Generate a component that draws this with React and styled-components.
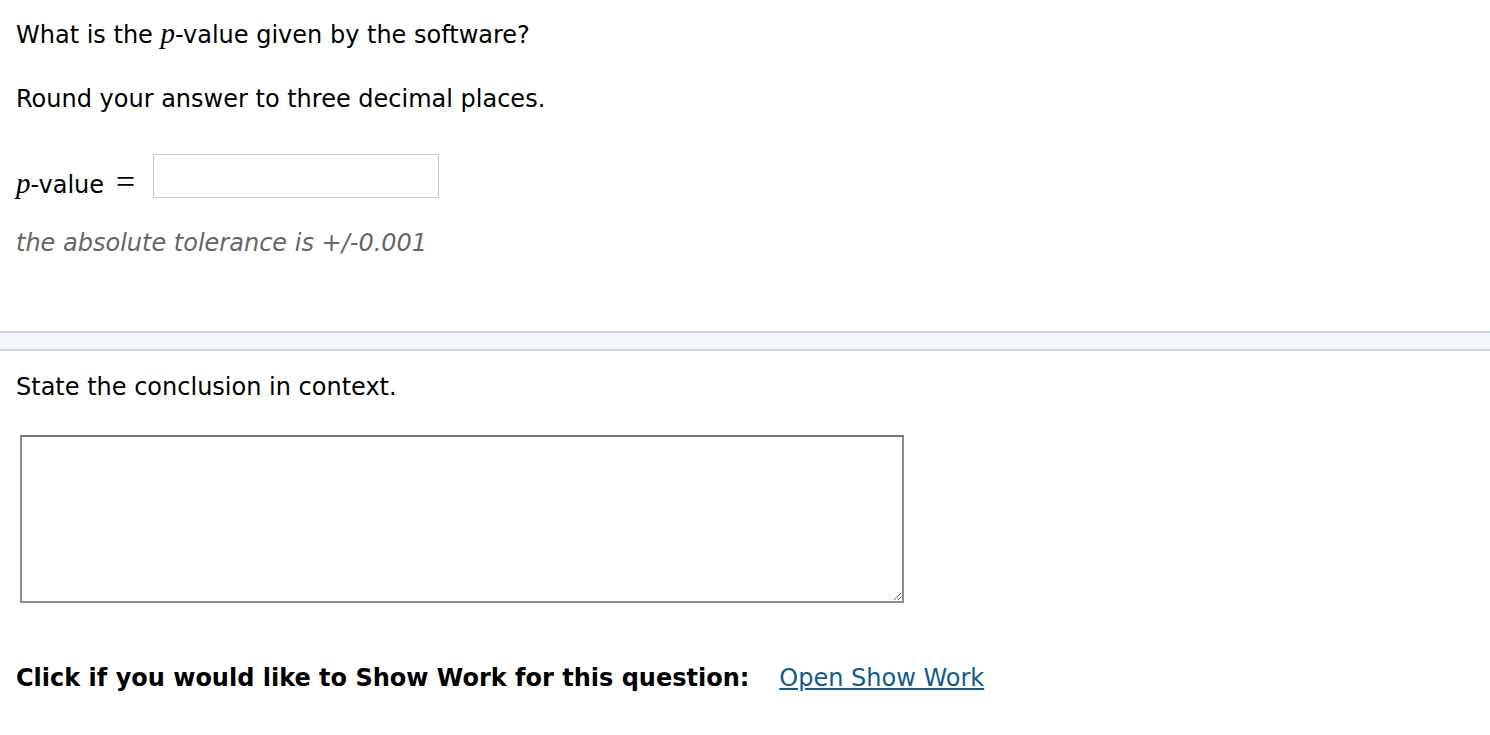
import React from "react";
import styled, { createGlobalStyle } from "styled-components";

const GlobalStyle = createGlobalStyle`
  body {
    margin: 0;
    background: #ffffff;
    font-family: "DejaVu Sans", Verdana, sans-serif;
    color: #000000;
  }
`;

const Page = styled.div`
  width: 1490px;
  padding-top: 18px;
`;

const Section = styled.div`
  padding: 0 16px;
`;

const Para = styled.p`
  margin: 0;
  font-size: 24px;
  line-height: 30px;
  margin-bottom: ${(p) => p.$gap || 0}px;
`;

const MathVar = styled.span`
  font-family: "Liberation Serif", "Times New Roman", serif;
  font-style: italic;
  font-size: 29px;
  line-height: 30px;
`;

const MathOp = styled.span`
  font-family: "Liberation Serif", "Times New Roman", serif;
  font-size: 34px;
  line-height: 30px;
  margin-left: 12px;
`;

const AnswerRow = styled.div`
  display: flex;
  align-items: center;
  gap: 18px;
  height: 44px;
  font-size: 24px;
  margin-bottom: 30px;
`;

const AnswerLabel = styled.span`
  padding-top: 14px;
  line-height: 30px;
`;

const AnswerInput = styled.input`
  width: 286px;
  height: 44px;
  box-sizing: border-box;
  border: 1px solid #c8c8c8;
  border-radius: 0;
  outline: none;
`;

const Hint = styled.p`
  margin: 0;
  font-size: 24px;
  line-height: 30px;
  font-style: italic;
  color: #666666;
`;

const Separator = styled.div`
  margin-top: 73px;
  height: 16px;
  background: #f4f7fa;
  border-top: 2px solid #cbd3df;
  border-bottom: 2px solid #cbd3df;
`;

const Conclusion = styled(Section)`
  padding-top: 21px;
`;

const AnswerArea = styled.textarea`
  display: block;
  margin: 33px 0 0 4px;
  width: 884px;
  height: 168px;
  box-sizing: border-box;
  border: 2px solid #8e8e8e;
  border-top-color: #767676;
  border-radius: 0;
  resize: both;
  outline: none;
`;

const ShowWork = styled.div`
  display: flex;
  align-items: center;
  gap: 30px;
  margin-top: 61px;
  font-size: 24px;
`;

const ShowWorkLabel = styled.span`
  font-weight: bold;
`;

const ShowWorkLink = styled.a`
  color: #115b8e;
  text-decoration: underline;
  cursor: pointer;
`;

const App = () => {
  return (
    <>
      <GlobalStyle />
      <Page>
        <Section>
          <Para $gap={34}>
            What is the <MathVar>p</MathVar>-value given by the software?
          </Para>
          <Para $gap={40}>Round your answer to three decimal places.</Para>
          <AnswerRow>
            <AnswerLabel>
              <MathVar>p</MathVar>-value<MathOp>=</MathOp>
            </AnswerLabel>
            <AnswerInput type="text" />
          </AnswerRow>
          <Hint>the absolute tolerance is +/-0.001</Hint>
        </Section>
        <Separator />
        <Conclusion>
          <Para>State the conclusion in context.</Para>
          <AnswerArea />
          <ShowWork>
            <ShowWorkLabel>
              Click if you would like to Show Work for this question:
            </ShowWorkLabel>
            <ShowWorkLink>Open Show Work</ShowWorkLink>
          </ShowWork>
        </Conclusion>
      </Page>
    </>
  );
};

export default App;
